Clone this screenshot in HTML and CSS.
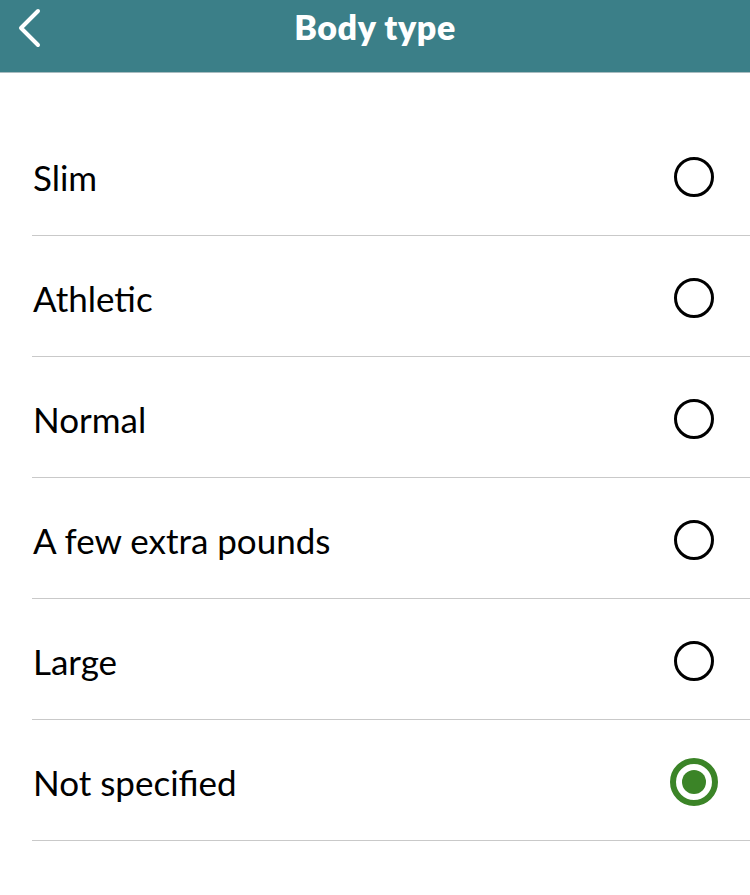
FILE: index.html
```html
<!DOCTYPE html>
<html lang="en">
<head>
  <meta charset="UTF-8">
  <meta name="viewport" content="width=device-width, initial-scale=1">
  <title>Body type</title>
  <link rel="stylesheet" href="styles.css">
</head>
<body>
  <header class="topbar">
    <button class="back-btn" aria-label="Back">
      <svg width="28" height="40" viewBox="0 0 28 40">
        <polyline points="22,3 5,20 22,37" fill="none" stroke="#fff" stroke-width="4" stroke-linecap="round" stroke-linejoin="round"/>
      </svg>
    </button>
    <h1>Body type</h1>
  </header>

  <main class="options">
    <label class="option"><span>Slim</span><span class="radio"></span></label>
    <label class="option"><span>Athletic</span><span class="radio"></span></label>
    <label class="option"><span>Normal</span><span class="radio"></span></label>
    <label class="option"><span>A few extra pounds</span><span class="radio"></span></label>
    <label class="option"><span>Large</span><span class="radio"></span></label>
    <label class="option"><span>Not specified</span><span class="radio checked"></span></label>
  </main>
</body>
</html>
```

FILE: styles.css
```css
* {
  box-sizing: border-box;
  margin: 0; padding: 0;
}
html, body {
  background: #fff;
  font-family: 'Lato', 'Noto Sans', sans-serif;
  color: #000;
}

.topbar {
  height: 73px;
  background: #3b7f88;
  border-bottom: 1px solid #a9bcc0;
  display: flex;
  align-items: center;
  justify-content: center;
  position: relative;
}
.topbar h1 {
  color: #fff;
  font-size: 34px;
  font-weight: 800;
  letter-spacing: 0.6px;
  margin-top: -20px;
}
.back-btn {
  position: absolute;
  left: 16px; top: 8px;
  background: none;
  border: none;
  display: flex;
}

.options {
  padding: 42px 0 0 32px;
  display: flex;
  flex-direction: column;
}
.option {
  height: 121px;
  border-bottom: 1px solid #c9c9c9;
  display: flex;
  align-items: center;
  justify-content: space-between;
  padding: 3px 36px 0 1px;
  font-size: 35px;
}

.radio {
  width: 40px; height: 40px;
  border: 3px solid #000;
  border-radius: 50%;
}
.radio.checked {
  width: 48px; height: 48px;
  border: 6px solid #3b8427;
  margin-right: -4px;
  display: flex;
  align-items: center;
  justify-content: center;
}
.radio.checked::after {
  content: "";
  width: 24px; height: 24px;
  background: #3b8427;
  border-radius: 50%;
}
```
